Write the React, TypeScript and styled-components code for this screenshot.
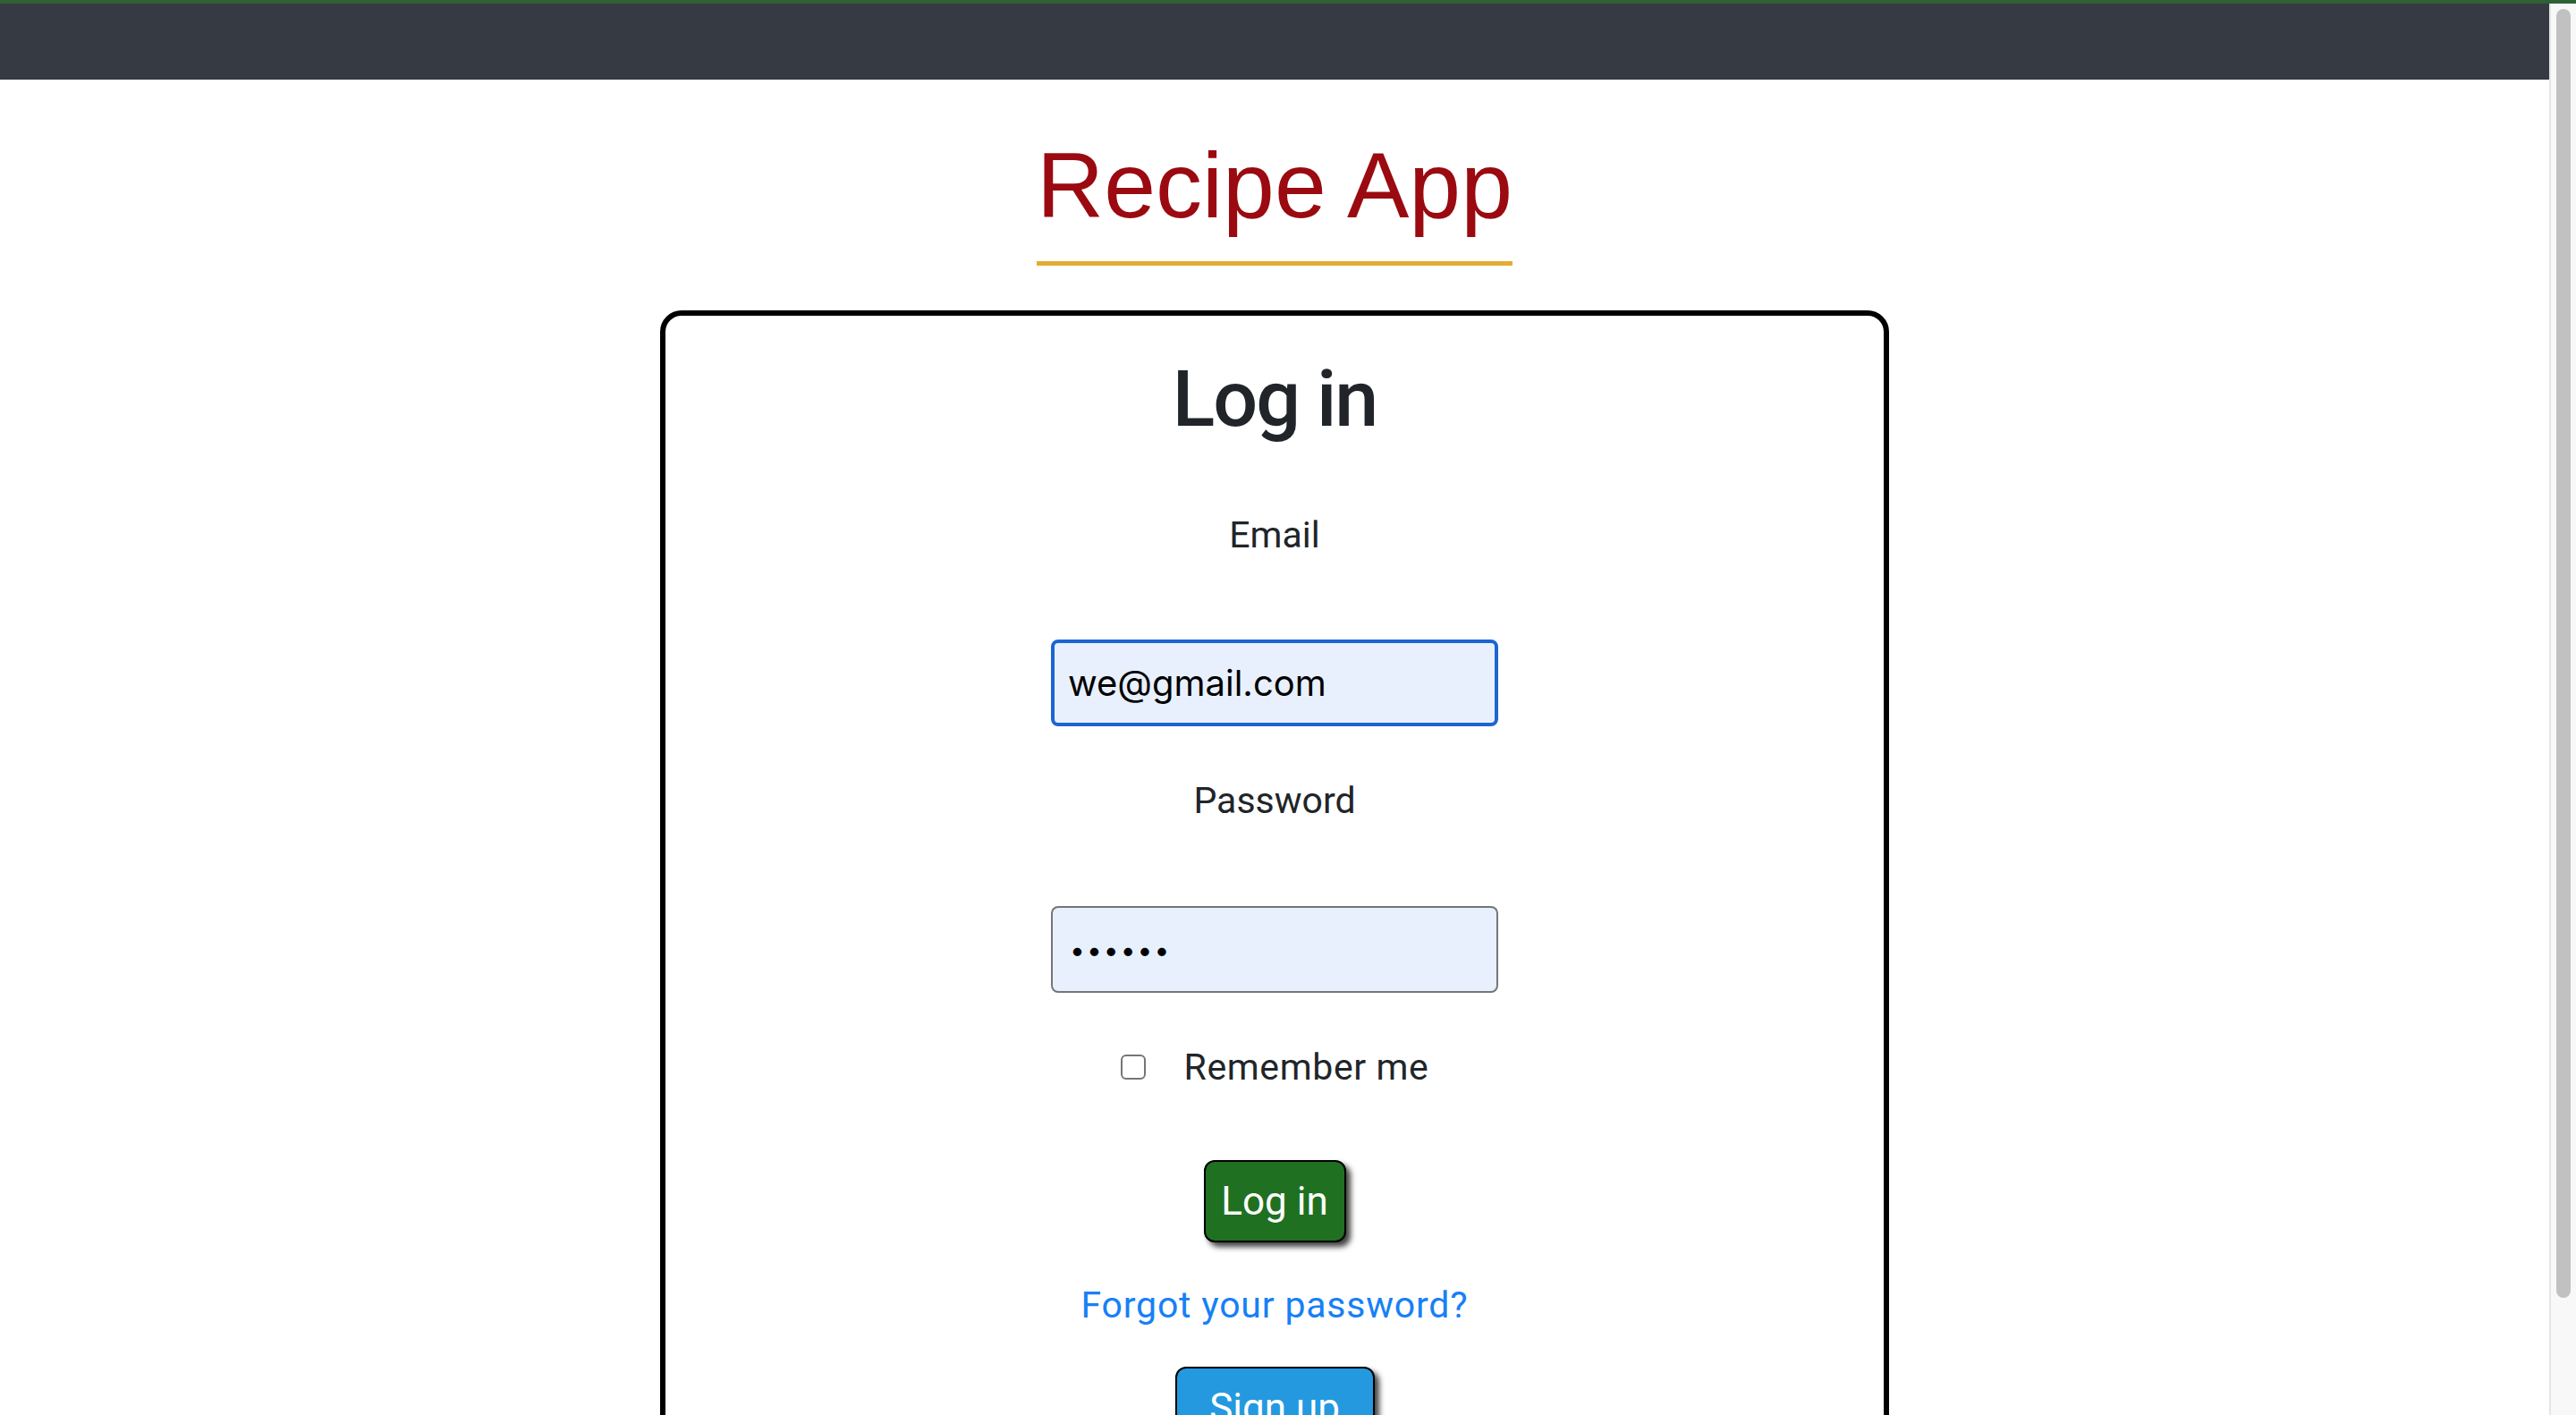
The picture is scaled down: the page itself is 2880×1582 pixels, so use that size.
import React from 'react';
import styled, { createGlobalStyle } from 'styled-components';

const GlobalStyle = createGlobalStyle`
  html,
  body {
    margin: 0;
    height: 100%;
    overflow: hidden;
  }

  body {
    font-family: Roboto, 'Noto Sans', 'Liberation Sans', sans-serif;
    color: #212529;
    background: #ffffff;
  }

  #root {
    height: 100%;
  }
`;

const Frame = styled.div`
  display: flex;
  flex-direction: column;
  height: 100%;
`;

const TopStrip = styled.div`
  flex: 0 0 4px;
  background: #2e6134;
`;

const Body = styled.div`
  flex: 1;
  display: flex;
  min-height: 0;
`;

const Viewport = styled.div`
  flex: 1;
  overflow: hidden;
`;

// the window's own scrollbar, drawn by hand
const ScrollRail = styled.div`
  box-sizing: border-box;
  flex: 0 0 30px;
  padding: 6px 6px 0 6px;
  background: #f8f8f8;
  border-left: 2px solid #e6e6e6;
`;

const ScrollThumb = styled.div`
  height: 1441px;
  border-radius: 8px;
  background: #c1c1c1;
`;

const NavBar = styled.nav`
  height: 85px;
  background: #363a43;
`;

const Main = styled.main`
  display: flex;
  flex-direction: column;
  align-items: center;
  padding-bottom: 50px;
`;

const Title = styled.h1`
  margin: 56px 0 0;
  padding-bottom: 22px;
  border-bottom: 5px solid #e3ad31;
  font-family: 'Liberation Sans', Arial, sans-serif;
  font-size: 104px;
  font-weight: 400;
  line-height: 125px;
  color: #9a0a10;
`;

const Card = styled.section`
  box-sizing: border-box;
  width: 1374px;
  margin-top: 50px;
  padding: 41px 0 40px;
  border: 6px solid #000000;
  border-radius: 24px;
  display: flex;
  flex-direction: column;
  align-items: center;
`;

const Heading = styled.h2`
  margin: 0;
  font-size: 88px;
  font-weight: 500;
  line-height: 103px;
  letter-spacing: -2px;
  color: #212529;
`;

const Label = styled.label<{ $gap: number }>`
  margin-top: ${(p) => p.$gap}px;
  font-size: 41px;
  line-height: 60px;
  color: #212529;
`;

const Field = styled.input<{ $focused?: boolean; $gap: number }>`
  box-sizing: border-box;
  width: 500px;
  height: 97px;
  margin-top: ${(p) => p.$gap}px;
  padding: 0 0 0 ${(p) => (p.$focused ? 15 : 19)}px;
  border: ${(p) => (p.$focused ? '4px solid #1b66d2' : '2px solid #767676')};
  border-radius: 8px;
  background: #e8f0fe;
  font-family: Inter, 'Noto Sans', sans-serif;
  font-size: 40px;
  color: #000000;
  outline: none;

  &[type='password'] {
    font-size: 30px;
    letter-spacing: 2px;
  }
`;

const CheckRow = styled.div`
  display: flex;
  align-items: center;
  margin-top: 53px;
  font-size: 41px;
  line-height: 60px;
  letter-spacing: 0.6px;
`;

const CheckBox = styled.input`
  appearance: none;
  box-sizing: border-box;
  width: 28px;
  height: 28px;
  margin: 0 43px 0 0;
  border: 2px solid #767676;
  border-radius: 6px;
  background: #ffffff;
`;

const ActionButton = styled.button<{ $tone: 'green' | 'blue'; $width: number; $gap: number }>`
  box-sizing: border-box;
  width: ${(p) => p.$width}px;
  height: 92px;
  margin-top: ${(p) => p.$gap}px;
  padding: 0;
  border: 2px solid #000000;
  border-radius: 12px;
  background: ${(p) => (p.$tone === 'green' ? '#1f7021' : '#2499e0')};
  box-shadow: 5px 5px 6px rgba(0, 0, 0, 0.75);
  font-family: Roboto, 'Noto Sans', sans-serif;
  font-size: 44px;
  color: #ffffff;
  display: flex;
  align-items: center;
  justify-content: center;
`;

const ForgotLink = styled.a`
  margin-top: 40px;
  font-size: 41px;
  line-height: 60px;
  letter-spacing: 0.8px;
  color: #1780f6;
  text-decoration: none;
`;

export default function App() {
  return (
    <Frame>
      <GlobalStyle />
      <TopStrip />
      <Body>
        <Viewport>
          <NavBar />
          <Main>
            <Title>Recipe App</Title>
            <Card>
              <Heading>Log in</Heading>
              <Label $gap={71} htmlFor="email">
                Email
              </Label>
              <Field id="email" type="email" defaultValue="we@gmail.com" $focused $gap={87} />
              <Label $gap={53} htmlFor="password">
                Password
              </Label>
              <Field id="password" type="password" defaultValue="secret" $gap={88} />
              <CheckRow>
                <CheckBox type="checkbox" id="remember" />
                <label htmlFor="remember">Remember me</label>
              </CheckRow>
              <ActionButton type="button" $tone="green" $width={159} $gap={74}>
                Log in
              </ActionButton>
              <ForgotLink href="#">Forgot your password?</ForgotLink>
              <ActionButton type="button" $tone="blue" $width={223} $gap={39}>
                Sign up
              </ActionButton>
            </Card>
          </Main>
        </Viewport>
        <ScrollRail>
          <ScrollThumb />
        </ScrollRail>
      </Body>
    </Frame>
  );
}
